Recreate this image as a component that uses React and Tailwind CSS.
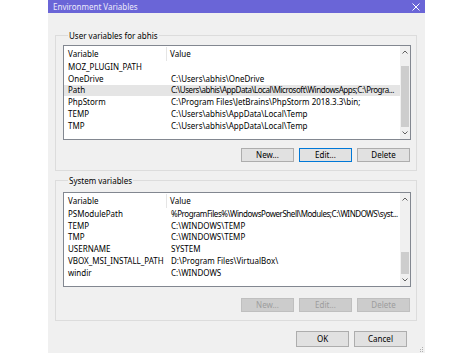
import React from 'react';

const userVars = [
    ['MOZ_PLUGIN_PATH', ''],
    ['OneDrive', 'C:\\Users\\abhis\\OneDrive'],
    ['Path', 'C:\\Users\\abhis\\AppData\\Local\\Microsoft\\WindowsApps;C:\\Progra...', true],
    ['PhpStorm', 'C:\\Program Files\\JetBrains\\PhpStorm 2018.3.3\\bin;'],
    ['TEMP', 'C:\\Users\\abhis\\AppData\\Local\\Temp'],
    ['TMP', 'C:\\Users\\abhis\\AppData\\Local\\Temp'],
];

const systemVars = [
    ['PSModulePath', '%ProgramFiles%\\WindowsPowerShell\\Modules;C:\\WINDOWS\\syst...', true],
    ['TEMP', 'C:\\WINDOWS\\TEMP'],
    ['TMP', 'C:\\WINDOWS\\TEMP'],
    ['USERNAME', 'SYSTEM'],
    ['VBOX_MSI_INSTALL_PATH', 'D:\\Program Files\\VirtualBox\\'],
    ['windir', 'C:\\WINDOWS'],
];

function Chevron({ up }) {
    return (
        <svg width="6" height="4" viewBox="0 0 6 4" className="block">
            <path d={up ? 'M0.5 3.5 L3 1 L5.5 3.5' : 'M0.5 0.5 L3 3 L5.5 0.5'} stroke="#606060" strokeWidth="1" fill="none" />
        </svg>
    );
}

function VarList({ rows, selected, thumbTop, thumbHeight }) {
    return (
        <div className="flex w-full h-[95px] border border-[#828790] bg-white">
            <div className="flex-1 min-w-0 pt-[1px] overflow-hidden">
                <div className="flex h-[14px] items-center">
                    <div className="w-[103px] shrink-0 pl-[4px] border-r border-[#e5e5e5] h-full flex items-center">Variable</div>
                    <div className="pl-[3px]">Value</div>
                </div>
                {rows.map(([name, value, long], i) => (
                    <div key={i} className={`flex h-[11.8px] items-center ${i === selected ? 'bg-[#e5e5e5]' : ''}`}>
                        <div className="w-[103px] shrink-0 pl-[4px] whitespace-nowrap">{name}</div>
                        <div className={`pl-[4px] whitespace-nowrap ${long ? 'tracking-[-0.45px]' : ''}`}>{value}</div>
                    </div>
                ))}
            </div>
            <div className="w-[10px] shrink-0 bg-[#f0f0f0] flex flex-col items-center">
                <div className="h-[12px] flex items-center"><Chevron up /></div>
                <div className="flex-1 w-full relative">
                    <div className="absolute left-[1px] right-[1px] bg-[#cdcdcd]" style={{ top: thumbTop, height: thumbHeight }} />
                </div>
                <div className="h-[12px] flex items-center"><Chevron /></div>
            </div>
        </div>
    );
}

function Btn({ children, disabled, focused, h = 'h-[14px]' }) {
    let cls = `w-[53px] ${h} flex items-center justify-center border `;
    if (disabled) cls += 'bg-[#cccccc] border-[#bfbfbf] text-[#9d9d9d]';
    else if (focused) cls += 'bg-[#e1e1e1] border-[#0078d7] text-black';
    else cls += 'bg-[#e1e1e1] border-[#adadad] text-black';
    return <div className={cls}>{children}</div>;
}

export default function App() {
    return (
        <div className="w-[474px] h-[355px] bg-white overflow-hidden text-[8px] leading-none text-black"
             style={{ fontFamily: '"Noto Sans", "Open Sans", sans-serif' }}>
            <div className="ml-[48px] w-[377px] h-[353px] bg-[#f0f0f0] flex flex-col">
                <div className="h-[17px] bg-[#6a65d7] flex items-center justify-between pl-[5px] pr-[5px]">
                    <span className="text-[#eceafb]">Environment Variables</span>
                    <svg width="8" height="8" viewBox="0 0 8 8">
                        <path d="M0.5 0.5 L7.5 7.5 M7.5 0.5 L0.5 7.5" stroke="#ffffff" strokeWidth="1" />
                    </svg>
                </div>

                <div className="flex flex-col pl-[7px] pr-[8px]">
                    <fieldset className="w-full min-w-0 mt-[17px] border border-[#dcdcdc] pl-[7px] pr-[5px] pb-[8px]">
                        <legend className="ml-[5px] px-[1px] h-[11px] leading-[11px]">User variables for abhis</legend>
                        <div className="mt-[4px]">
                            <VarList rows={userVars} selected={2} thumbTop={8} thumbHeight={61} />
                        </div>
                        <div className="flex justify-end gap-[5px] mt-[8px] mr-[1px]">
                            <Btn>New...</Btn>
                            <Btn focused>Edit...</Btn>
                            <Btn>Delete</Btn>
                        </div>
                    </fieldset>

                    <fieldset className="w-full min-w-0 mt-[4px] border border-[#dcdcdc] pl-[7px] pr-[5px] pb-[8px]">
                        <legend className="ml-[5px] px-[1px] h-[11px] leading-[11px]">System variables</legend>
                        <div className="mt-[6px]">
                            <VarList rows={systemVars} selected={-1} thumbTop={47} thumbHeight={22} />
                        </div>
                        <div className="flex justify-end gap-[5px] mt-[11px] mr-[1px]">
                            <Btn disabled>New...</Btn>
                            <Btn disabled>Edit...</Btn>
                            <Btn disabled>Delete</Btn>
                        </div>
                    </fieldset>
                </div>

                <div className="flex justify-end gap-[5px] mt-[10px] pr-[18px]">
                    <Btn h="h-[16px]">OK</Btn>
                    <Btn h="h-[16px]">Cancel</Btn>
                </div>
                <div className="flex-1 flex items-end justify-end pr-[1px] pb-[1px]">
                    <svg width="5" height="5" viewBox="0 0 5 5">
                        <rect x="3" y="0" width="1" height="1" fill="#b0b0b0" />
                        <rect x="1" y="2" width="1" height="1" fill="#b0b0b0" />
                        <rect x="3" y="2" width="1" height="1" fill="#b0b0b0" />
                        <rect x="3" y="4" width="1" height="1" fill="#b0b0b0" />
                        <rect x="1" y="4" width="1" height="1" fill="#b0b0b0" />
                    </svg>
                </div>
            </div>
        </div>
    );
}
